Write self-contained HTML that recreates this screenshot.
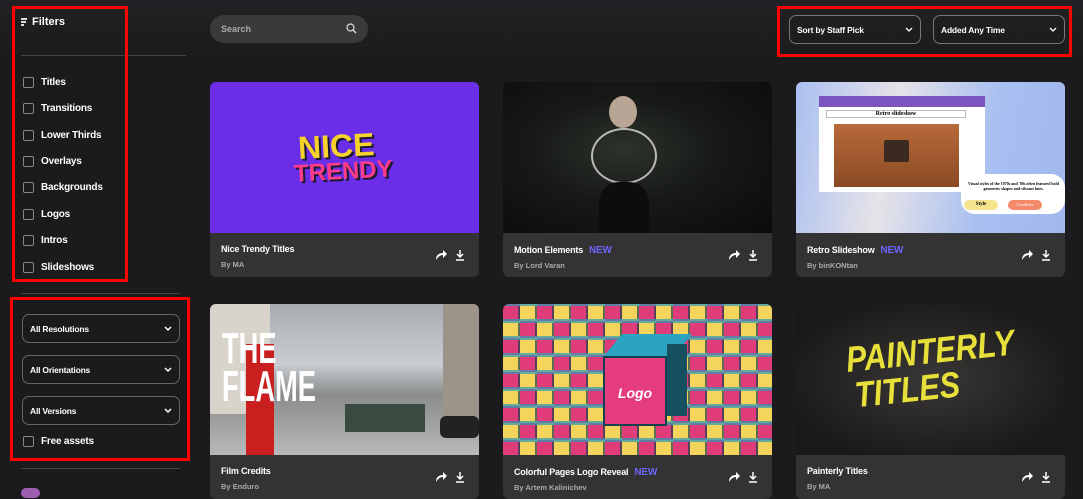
<!DOCTYPE html>
<html><head><style>
*{margin:0;padding:0;box-sizing:border-box}
body{width:1083px;height:492px;overflow:hidden;background:#1b1a1c;font-family:"Liberation Sans",sans-serif;color:#fff;position:relative}
.a{position:absolute}
.red{position:absolute;border:3px solid #f00}
.line{position:absolute;height:1px;background:#444}
.cb{position:absolute;left:23px;width:11px;height:11px;border:1px solid #888;border-radius:2px}
.lbl{position:absolute;left:41px;font-size:10px;font-weight:bold;letter-spacing:-0.2px}
.sel{position:absolute;border:1px solid #666;border-radius:7px;font-size:8.5px;font-weight:bold;padding-left:7px;display:flex;align-items:center;letter-spacing:-0.2px}
.sel svg{position:absolute;right:7px;top:50%;margin-top:-3px}
.card{position:absolute;width:269px;border-radius:6px;overflow:hidden;background:#333}
.img{height:151px;position:relative;overflow:hidden}
.info{height:44px;position:relative}
.t{position:absolute;left:11px;top:11px;font-size:9px;font-weight:bold;letter-spacing:-0.2px}
.t b{color:#6e63ff;font-size:10px;margin-left:6px}
.by{position:absolute;left:11px;top:27px;font-size:7.5px;color:#aaa;font-weight:bold}
.ic{position:absolute;right:12px;top:16px}
</style></head><body>
<div class="a" style="left:0;top:0;width:1083px;height:60px;background:linear-gradient(#222124,#1b1a1c)"></div>

<div class="a" style="left:21px;top:18px;width:6px;height:1.5px;background:#ddd"></div>
<div class="a" style="left:21px;top:21px;width:5px;height:1.5px;background:#ddd"></div>
<div class="a" style="left:21px;top:24px;width:3px;height:1.5px;background:#ddd"></div>
<div class="a" style="left:32px;top:16px;font-size:11px;font-weight:bold">Filters</div>
<div class="line" style="left:21px;top:55px;width:165px"></div>
<div class="cb" style="top:77px"></div><div class="lbl" style="top:77px">Titles</div>
<div class="cb" style="top:103px"></div><div class="lbl" style="top:103px">Transitions</div>
<div class="cb" style="top:130px"></div><div class="lbl" style="top:130px">Lower Thirds</div>
<div class="cb" style="top:156px"></div><div class="lbl" style="top:156px">Overlays</div>
<div class="cb" style="top:182px"></div><div class="lbl" style="top:182px">Backgrounds</div>
<div class="cb" style="top:209px"></div><div class="lbl" style="top:209px">Logos</div>
<div class="cb" style="top:235px"></div><div class="lbl" style="top:235px">Intros</div>
<div class="cb" style="top:262px"></div><div class="lbl" style="top:262px">Slideshows</div>
<div class="red" style="left:12px;top:6px;width:116px;height:276px"></div>
<div class="line" style="left:21px;top:293px;width:159px"></div>
<div class="red" style="left:10px;top:297px;width:180px;height:164px"></div>
<div class="sel" style="left:22px;top:314px;width:158px;height:29px">All Resolutions<svg width="8" height="6"><path d="M1 1 L4 4 L7 1" stroke="#fff" stroke-width="1.5" fill="none"/></svg></div>
<div class="sel" style="left:22px;top:355px;width:158px;height:29px">All Orientations<svg width="8" height="6"><path d="M1 1 L4 4 L7 1" stroke="#fff" stroke-width="1.5" fill="none"/></svg></div>
<div class="sel" style="left:22px;top:396px;width:158px;height:29px">All Versions<svg width="8" height="6"><path d="M1 1 L4 4 L7 1" stroke="#fff" stroke-width="1.5" fill="none"/></svg></div>
<div class="cb" style="top:436px"></div><div class="lbl" style="top:436px">Free assets</div>
<div class="line" style="left:21px;top:468px;width:159px"></div>
<div class="a" style="left:21px;top:488px;width:19px;height:10px;border-radius:6px;background:#9c5fb0"></div>

<div class="a" style="left:210px;top:15px;width:158px;height:28px;border-radius:14px;background:#3a3a3c"></div>
<div class="a" style="left:221px;top:24px;font-size:9px;color:#aaa;font-weight:bold">Search</div>
<svg class="a" style="left:346px;top:23px" width="11" height="11"><circle cx="4.5" cy="4.5" r="3.5" stroke="#ddd" stroke-width="1.2" fill="none"/><path d="M7 7 L10 10" stroke="#ddd" stroke-width="1.3"/></svg>
<div class="sel" style="left:789px;top:15px;width:132px;height:29px;border-color:#777">Sort by Staff Pick<svg width="8" height="6"><path d="M1 1 L4 4 L7 1" stroke="#fff" stroke-width="1.3" fill="none"/></svg></div>
<div class="sel" style="left:933px;top:15px;width:132px;height:29px;border-color:#777">Added Any Time<svg width="8" height="6"><path d="M1 1 L4 4 L7 1" stroke="#fff" stroke-width="1.3" fill="none"/></svg></div>
<div class="red" style="left:777px;top:6px;width:295px;height:51px"></div>

<div class="card" style="left:210px;top:82px">
 <div class="img" style="background:#6a2ee8">
  <div class="a" style="left:88px;top:46px;font:900 32px 'Liberation Sans';color:#f6d22a;text-shadow:2px 2px 0 #1a1a2e;transform:rotate(-3deg)">NICE</div>
  <div class="a" style="left:84px;top:76px;font:900 24px 'Liberation Sans';color:#ff3b8a;text-shadow:2px 2px 0 #1a1a2e;transform:rotate(-3deg)">TRENDY</div>
 </div>
 <div class="info"><div class="t">Nice Trendy Titles</div><div class="by">By MA</div>
 <svg class="ic" width="32" height="12"><path d="M1 11 C1 6 4 4 8 4 L8 1 L12 5 L8 9 L8 6 C5 6 3 8 1 11Z" fill="#fff"/><path d="M25 1 V8 M22 5 L25 8 L28 5 M21 11 H29" stroke="#fff" stroke-width="1.5" fill="none"/></svg></div>
</div>
<div class="card" style="left:503px;top:82px">
 <div class="img" style="background:radial-gradient(ellipse at 45% 45%,#2e322c 0%,#161916 45%,#0a0c0a 100%)">
  <div class="a" style="left:106px;top:14px;width:28px;height:32px;border-radius:50%;background:#b9a595"></div>
  <div class="a" style="left:88px;top:46px;width:66px;height:56px;border-radius:50%;border:2px solid #ddd;opacity:.8"></div>
  <div class="a" style="left:96px;top:100px;width:50px;height:51px;background:#0d0d0d;border-radius:20px 20px 0 0"></div>
 </div>
 <div class="info"><div class="t" style="top:12px">Motion Elements<b>NEW</b></div><div class="by" style="top:28px">By Lord Varan</div>
 <svg class="ic" width="32" height="12"><path d="M1 11 C1 6 4 4 8 4 L8 1 L12 5 L8 9 L8 6 C5 6 3 8 1 11Z" fill="#fff"/><path d="M25 1 V8 M22 5 L25 8 L28 5 M21 11 H29" stroke="#fff" stroke-width="1.5" fill="none"/></svg></div>
</div>
<div class="card" style="left:796px;top:82px">
 <div class="img" style="background:linear-gradient(100deg,#a9bff0 0%,#e6e3e8 35%,#a8bff0 70%,#a0b8ee 100%)">
  <div class="a" style="left:23px;top:14px;width:166px;height:96px;background:#fff;border-top:11px solid #7c54c0"></div>
  <div class="a" style="left:30px;top:28px;width:140px;height:8px;border:1px solid #bbb;font:bold 6px 'Liberation Serif';color:#000;text-align:center;line-height:6px">Retro slideshow</div>
  <div class="a" style="left:38px;top:42px;width:125px;height:63px;background:linear-gradient(#b86a3a,#8a4a24)"></div>
  <div class="a" style="left:88px;top:58px;width:25px;height:22px;background:#3a2a20;border-radius:2px"></div>
  <div class="a" style="left:165px;top:92px;width:104px;height:40px;background:#fff;border-radius:14px"></div>
  <div class="a" style="left:170px;top:99px;width:95px;font:bold 4px 'Liberation Serif';color:#000;text-align:center">Visual styles of the 1970s and '80s often featured bold geometric shapes and vibrant hues.</div>
  <div class="a" style="left:168px;top:118px;width:34px;height:10px;background:#f6e38e;border-radius:5px;font:bold 5px 'Liberation Serif';color:#000;text-align:center;line-height:10px">Style</div>
  <div class="a" style="left:212px;top:118px;width:34px;height:10px;background:#f38a6a;border-radius:5px;font:bold 4px 'Liberation Serif';color:#fdd;text-align:center;line-height:10px">Creativity</div>
 </div>
 <div class="info"><div class="t" style="top:12px">Retro Slideshow<b>NEW</b></div><div class="by" style="top:28px">By binKONtan</div>
 <svg class="ic" width="32" height="12"><path d="M1 11 C1 6 4 4 8 4 L8 1 L12 5 L8 9 L8 6 C5 6 3 8 1 11Z" fill="#fff"/><path d="M25 1 V8 M22 5 L25 8 L28 5 M21 11 H29" stroke="#fff" stroke-width="1.5" fill="none"/></svg></div>
</div>

<div class="card" style="left:210px;top:304px">
 <div class="img" style="background:linear-gradient(#a8acb0 0%,#c9ccd0 40%,#8a8d8c 60%,#b8b9ba 100%)">
  <div class="a" style="left:0;top:0;width:60px;height:110px;background:#d8d4cc"></div>
  <div class="a" style="right:0;top:0;width:36px;height:120px;background:#9c9488"></div>
  <div class="a" style="left:36px;top:40px;width:28px;height:111px;background:#c9201f"></div>
  <div class="a" style="left:12px;top:26px;font:900 44px/38px 'Liberation Sans';color:#fff;transform:scaleX(.62);transform-origin:left">THE<br>FLAME</div>
  <div class="a" style="left:135px;top:100px;width:80px;height:28px;background:#3a4a40"></div>
  <div class="a" style="left:230px;top:112px;width:39px;height:22px;background:#222;border-radius:6px"></div>
 </div>
 <div class="info"><div class="t">Film Credits</div><div class="by">By Enduro</div>
 <svg class="ic" width="32" height="12"><path d="M1 11 C1 6 4 4 8 4 L8 1 L12 5 L8 9 L8 6 C5 6 3 8 1 11Z" fill="#fff"/><path d="M25 1 V8 M22 5 L25 8 L28 5 M21 11 H29" stroke="#fff" stroke-width="1.5" fill="none"/></svg></div>
</div>
<div class="card" style="left:503px;top:304px">
 <div class="img" style="background:#1b4250">
  <div class="a" style="inset:0;background:repeating-conic-gradient(#f4d45a 0 25%,#e03c7a 0 50%) 0 0/34px 34px"></div>
  <div class="a" style="inset:0;background:repeating-linear-gradient(0deg,transparent 0 13px,#2a9ab8 13px 17px),repeating-linear-gradient(90deg,transparent 0 15px,#1b4250 15px 17px);opacity:.7"></div>
  <div class="a" style="left:100px;top:52px;width:64px;height:70px;background:#e43c7e;border:2px solid #144050;font:italic 900 14px/70px 'Liberation Sans';text-align:center">Logo</div>
  <div class="a" style="left:110px;top:30px;width:70px;height:22px;background:#2ba4c2;transform:skewX(-40deg)"></div>
  <div class="a" style="left:164px;top:40px;width:20px;height:72px;background:#16505f"></div>
 </div>
 <div class="info"><div class="t" style="top:12px">Colorful Pages Logo Reveal<b>NEW</b></div><div class="by" style="top:28px">By Artem Kalinichev</div>
 <svg class="ic" width="32" height="12"><path d="M1 11 C1 6 4 4 8 4 L8 1 L12 5 L8 9 L8 6 C5 6 3 8 1 11Z" fill="#fff"/><path d="M25 1 V8 M22 5 L25 8 L28 5 M21 11 H29" stroke="#fff" stroke-width="1.5" fill="none"/></svg></div>
</div>
<div class="card" style="left:796px;top:304px">
 <div class="img" style="background:radial-gradient(ellipse at 50% 50%,#3a3836,#1a1918 80%)">
  <div class="a" style="left:52px;top:38px;font:italic 900 36px/36px 'Liberation Sans';color:#e8e03a;transform:rotate(-6deg) scaleX(.85);transform-origin:left">PAINTERLY<br><span style="margin-left:6px">TITLES</span></div>
 </div>
 <div class="info"><div class="t">Painterly Titles</div><div class="by">By MA</div>
 <svg class="ic" width="32" height="12"><path d="M1 11 C1 6 4 4 8 4 L8 1 L12 5 L8 9 L8 6 C5 6 3 8 1 11Z" fill="#fff"/><path d="M25 1 V8 M22 5 L25 8 L28 5 M21 11 H29" stroke="#fff" stroke-width="1.5" fill="none"/></svg></div>
</div>
</body></html>
